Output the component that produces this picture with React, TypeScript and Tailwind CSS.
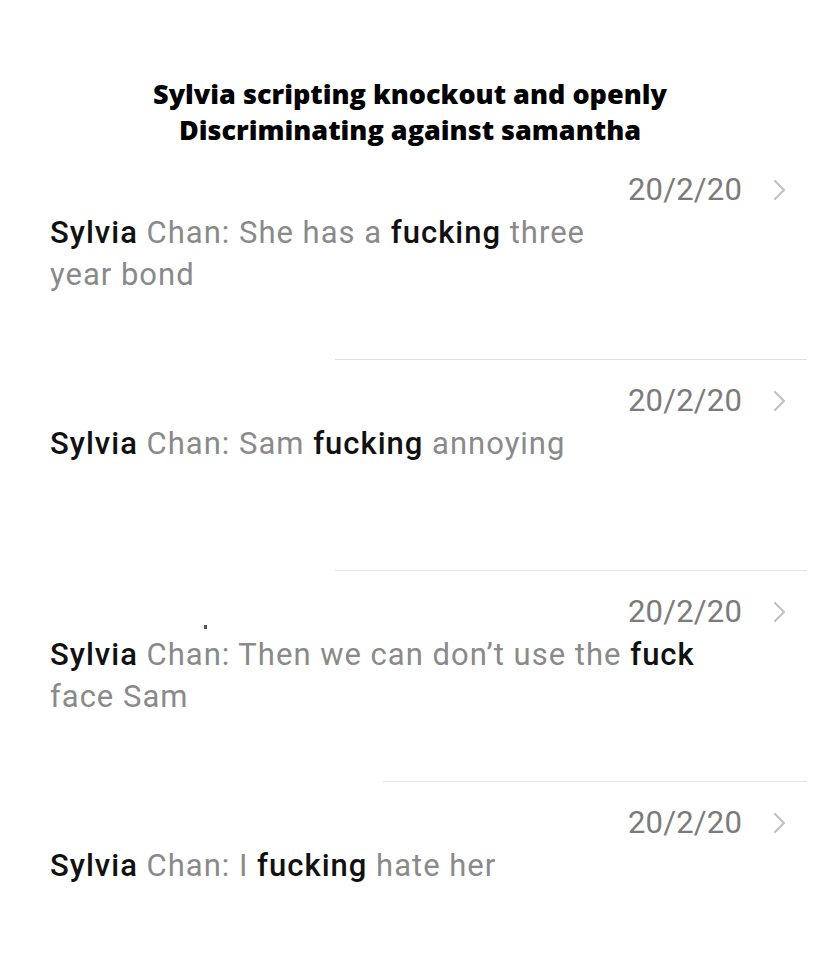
const items = [
  {
    divider: "",
    lines: [
      [
        { t: "Sylvia", b: true },
        { t: " Chan: She has a " },
        { t: "fucking", b: true },
        { t: " three" },
      ],
      [{ t: "year bond" }],
    ],
  },
  {
    divider: "ml-[335px]",
    lines: [
      [
        { t: "Sylvia", b: true },
        { t: " Chan: Sam " },
        { t: "fucking", b: true },
        { t: " annoying" },
      ],
    ],
  },
  {
    divider: "ml-[335px]",
    dot: true,
    lines: [
      [
        { t: "Sylvia", b: true },
        { t: " Chan: Then we can don’t use the " },
        { t: "fuck", b: true },
      ],
      [{ t: "face Sam" }],
    ],
  },
  {
    divider: "ml-[383px]",
    lines: [
      [
        { t: "Sylvia", b: true },
        { t: " Chan: I " },
        { t: "fucking", b: true },
        { t: " hate her" },
      ],
    ],
  },
];

const Chevron = () => (
  <svg width="16" height="22" viewBox="0 0 16 22" fill="none">
    <path d="M3 2 L12 11 L3 20" stroke="#c2c2c2" strokeWidth="2.2" strokeLinecap="round" strokeLinejoin="round" />
  </svg>
);

const App = () => {
  return (
    <div className="w-[820px] h-[974px] bg-white overflow-hidden">
      <div className="pt-[76px] text-center font-['Open_Sans',sans-serif] font-extrabold text-[27px] leading-[36px] text-black">
        <p>Sylvia scripting knockout and openly</p>
        <p>Discriminating against samantha</p>
      </div>

      {items.map((item, i) => (
        <div key={i} className="h-[211px] relative font-['Roboto',Arial,sans-serif]">
          <div className={`h-px mr-[13px] ${item.divider ? item.divider + " bg-[#e2e2e2]" : "bg-transparent"}`} />
          {item.dot && (
            <div className="absolute left-[204px] top-[55px] w-[3px] h-[4px] bg-[#555]" />
          )}
          <div className="flex items-center justify-end mt-[21px] h-[40px] pr-[32px]">
            <span className="text-[31px] text-[#7b7b7b] tracking-[0.2px]">20/2/20</span>
            <span className="ml-[30px] flex items-center">
              <Chevron />
            </span>
          </div>
          <div className="mt-[2px] pl-[50px] text-[31px] leading-[42px] text-[#8a8a8a] tracking-[1px]">
            {item.lines.map((line, j) => (
              <p key={j} className="whitespace-pre">
                {line.map((s, k) => (
                  <span key={k} className={s.b ? "text-[#111] font-medium" : ""}>
                    {s.t}
                  </span>
                ))}
              </p>
            ))}
          </div>
        </div>
      ))}
    </div>
  );
};

export default App;
